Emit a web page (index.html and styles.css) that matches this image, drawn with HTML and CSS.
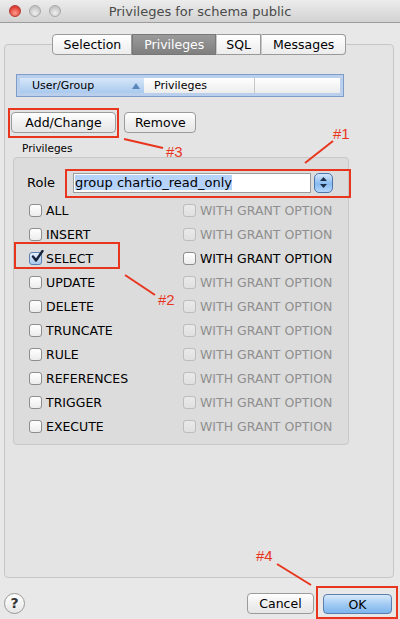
FILE: index.html
```html
<!DOCTYPE html>
<html lang="en">
<head>
  <meta charset="UTF-8">
  <title>Privileges for schema public</title>
  <link rel="stylesheet" href="styles.css">
</head>
<body>
  <div class="window">
    <div class="titlebar">
      <div class="lights">
        <span class="light red"></span>
        <span class="light"></span>
        <span class="light"></span>
      </div>
      <div class="title">Privileges for schema public</div>
      <div></div>
    </div>

    <div class="main">
      <div class="tabs">
        <span class="tab">Selection</span>
        <span class="tab active">Privileges</span>
        <span class="tab">SQL</span>
        <span class="tab">Messages</span>
      </div>

      <div class="panel">
        <div class="table-box">
          <div class="thead">
            <div class="th sorted">User/Group <span class="sort-arrow"></span></div>
            <div class="th">Privileges</div>
            <div class="th last"></div>
          </div>
        </div>

        <div class="btn-row">
          <button class="btn add">Add/Change</button>
          <button class="btn remove">Remove</button>
        </div>

        <div class="group-label">Privileges</div>
        <div class="group">
          <div class="role-row">
            <span class="role-label">Role</span>
            <div class="role-input"><span class="selected-text">group chartio_read_only</span></div>
            <span class="stepper">
              <svg width="9" height="13" viewBox="0 0 9 13"><path d="M4.5 1 L8 5 H1 Z M4.5 12 L8 8 H1 Z" fill="#1d2f4a"/></svg>
            </span>
          </div>

          <div class="priv-list">
            <div class="priv"><span class="col"><span class="cb"></span>ALL</span><span class="col grant off"><span class="cb"></span>WITH GRANT OPTION</span></div>
            <div class="priv"><span class="col"><span class="cb"></span>INSERT</span><span class="col grant off"><span class="cb"></span>WITH GRANT OPTION</span></div>
            <div class="priv"><span class="col"><span class="cb checked"><svg width="14" height="14" viewBox="0 0 14 14"><path d="M3 6.5 L6 10.5 L12.5 1" fill="none" stroke="#16233a" stroke-width="2.4" stroke-linecap="round" stroke-linejoin="round"/></svg></span>SELECT</span><span class="col grant"><span class="cb"></span>WITH GRANT OPTION</span></div>
            <div class="priv"><span class="col"><span class="cb"></span>UPDATE</span><span class="col grant off"><span class="cb"></span>WITH GRANT OPTION</span></div>
            <div class="priv"><span class="col"><span class="cb"></span>DELETE</span><span class="col grant off"><span class="cb"></span>WITH GRANT OPTION</span></div>
            <div class="priv"><span class="col"><span class="cb"></span>TRUNCATE</span><span class="col grant off"><span class="cb"></span>WITH GRANT OPTION</span></div>
            <div class="priv"><span class="col"><span class="cb"></span>RULE</span><span class="col grant off"><span class="cb"></span>WITH GRANT OPTION</span></div>
            <div class="priv"><span class="col"><span class="cb"></span>REFERENCES</span><span class="col grant off"><span class="cb"></span>WITH GRANT OPTION</span></div>
            <div class="priv"><span class="col"><span class="cb"></span>TRIGGER</span><span class="col grant off"><span class="cb"></span>WITH GRANT OPTION</span></div>
            <div class="priv"><span class="col"><span class="cb"></span>EXECUTE</span><span class="col grant off"><span class="cb"></span>WITH GRANT OPTION</span></div>
          </div>
        </div>
      </div>

      <div class="footer">
        <span class="help">?</span>
        <div class="footer-btns">
          <button class="btn cancel">Cancel</button>
          <button class="btn ok">OK</button>
        </div>
      </div>
    </div>

    <!-- red annotations drawn over the dialog -->
    <svg class="notes" width="400" height="619" viewBox="0 0 400 619">
      <g fill="none" stroke="#e8361e" stroke-width="2">
        <rect x="9" y="109" width="109" height="28"/>
        <rect x="66" y="170" width="284" height="27"/>
        <rect x="15" y="243" width="104" height="25"/>
        <rect x="317" y="587" width="80" height="31"/>
        <line x1="305" y1="163" x2="333" y2="141"/>
        <line x1="124" y1="139" x2="163" y2="148"/>
        <line x1="125" y1="275" x2="155" y2="295"/>
        <line x1="277" y1="564" x2="311" y2="585"/>
      </g>
      <g class="note-text">
        <text x="333" y="139">#1</text>
        <text x="166" y="157">#3</text>
        <text x="158" y="305">#2</text>
        <text x="256" y="561">#4</text>
      </g>
    </svg>
  </div>
</body>
</html>
```

FILE: styles.css
```css
body {
  margin: 0;
  font-family: 'DejaVu Sans', Verdana, sans-serif;
  color: #000;
}

.window {
  position: relative;
  width: 400px;
  height: 619px;
  background-color: #e8e8e8;
  display: flex;
  flex-direction: column;
  overflow: hidden;
}

/* title bar */
.titlebar {
  height: 22px;
  flex: none;
  display: grid;
  grid-template-columns: 80px 1fr 80px;
  align-items: center;
  background: linear-gradient(#ececec, #d2d2d2);
  border-bottom: 1px solid #9c9c9c;
}

.lights {
  display: flex;
  gap: 8px;
  padding-left: 9px;
}

.light {
  width: 12px;
  height: 12px;
  border-radius: 50%;
  box-sizing: border-box;
  border: 1px solid #a9a9a9;
  background: radial-gradient(circle at 50% 70%, #f0f0f0, #c4c4c4 70%);
}

.light.red {
  border-color: #b53a33;
  background: radial-gradient(circle at 50% 70%, #ff9a8a, #dc3d32 70%);
}

.title {
  font-size: 13px;
  color: #4a4a4a;
  text-align: center;
  white-space: nowrap;
}

/* main area */
.main {
  flex: 1;
  display: flex;
  flex-direction: column;
  padding: 11px 6px 0 4px;
}

.tabs {
  display: flex;
  justify-content: center;
  position: relative;
  z-index: 1;
  margin-bottom: -11px;
}

.tab {
  height: 19px;
  line-height: 19px;
  font-size: 12.5px;
  padding: 0 9px;
  background: linear-gradient(#ffffff, #ececec);
  border: 1px solid #9a9a9a;
  border-left: 1px solid #c8c8c8;
}

.tab:first-child {
  border-left: 1px solid #9a9a9a;
  border-radius: 4px 0 0 4px;
  padding: 0 10px 0 11px;
}

.tab:last-child {
  border-radius: 0 4px 4px 0;
  padding: 0 11px;
}

.tab.active {
  background: linear-gradient(#9a9a9a, #7f7f7f);
  border-color: #777;
  color: #fff;
  padding: 0 11px;
}

.panel {
  flex: 1;
  border: 1px solid #c6c6c6;
  border-radius: 4px;
  background-color: #e4e4e4;
  padding: 29px 0 0 6px;
}

/* table header box */
.table-box {
  margin-left: 5px;
  width: 328px;
  height: 23px;
  box-sizing: border-box;
  border: 1px solid #7e9cc8;
  background-color: #b9cfec;
  padding: 3px 3px;
}

.thead {
  display: flex;
  height: 15px;
  background: linear-gradient(#ffffff, #ececec);
  font-size: 11px;
}

.th {
  line-height: 15px;
  padding-left: 10px;
  width: 100px;
  border-right: 1px solid #c6c6c6;
}

.th.sorted {
  position: relative;
  width: 112px;
  padding-left: 12px;
  background: linear-gradient(#d6e6f8, #a9c9ee);
  border-right: none;
}

.th.last {
  flex: 1;
  border-right: none;
}

.sort-arrow {
  position: absolute;
  right: 4px;
  top: 5px;
  border-left: 4px solid transparent;
  border-right: 4px solid transparent;
  border-bottom: 6px solid #5a86bd;
}

/* buttons */
.btn-row {
  display: flex;
  gap: 8px;
  margin-top: 15px;
}

.btn {
  height: 21px;
  padding: 0 10px;
  font-family: 'DejaVu Sans', Verdana, sans-serif;
  font-size: 12.5px;
  color: #000;
  background: linear-gradient(#ffffff, #f0f0f0 50%, #e6e6e6);
  border: 1px solid #9b9b9b;
  border-radius: 4px;
}

.btn.add {
  width: 105px;
}

.btn.remove {
  width: 72px;
}

.group-label {
  font-size: 10.5px;
  margin: 9px 0 0 11px;
  height: 13px;
}

.group {
  margin: 2px 0 0 2px;
  width: 336px;
  height: 288px;
  box-sizing: border-box;
  border: 1px solid #c8c8c8;
  border-radius: 4px;
  background-color: #dcdcdc;
  padding: 14px 0 0 13px;
}

.role-row {
  display: flex;
  align-items: center;
  height: 21px;
  font-size: 13px;
}

.role-label {
  width: 46px;
}

.role-input {
  width: 238px;
  height: 20px;
  box-sizing: border-box;
  border: 1px solid #9c9c9c;
  background-color: #fff;
  padding-left: 1px;
  line-height: 18px;
}

.selected-text {
  background-color: #b5d3fb;
}

.stepper {
  margin-left: 3px;
  width: 19px;
  height: 20px;
  box-sizing: border-box;
  border: 1px solid #4d76ad;
  border-radius: 5px;
  background: linear-gradient(#d3e6fb, #88baf0 55%, #b3d6fb);
  display: flex;
  align-items: center;
  justify-content: center;
}

.priv-list {
  margin-top: 5px;
}

.priv {
  display: flex;
  height: 24px;
  align-items: center;
  font-size: 12.5px;
}

.col {
  display: flex;
  align-items: center;
  gap: 4px;
  width: 154px;
  padding-left: 2px;
}

.col.grant {
  width: auto;
  padding-left: 0;
}

.col.off {
  color: #8f8f8f;
}

.cb {
  width: 13px;
  height: 13px;
  box-sizing: border-box;
  border: 1px solid #8d8d8d;
  border-radius: 3px;
  background: linear-gradient(#ffffff, #ececec);
  position: relative;
}

.off .cb {
  border-color: #bdbdbd;
  background: linear-gradient(#eaeaea, #e0e0e0);
}

.cb.checked {
  border-color: #5a7fb0;
  background: linear-gradient(#e4effc, #a9c9ee);
}

.cb.checked svg {
  position: absolute;
  left: 0;
  top: -3px;
}

/* footer */
.footer {
  height: 41px;
  flex: none;
  display: flex;
  align-items: flex-start;
  justify-content: space-between;
  padding-top: 15px;
  box-sizing: border-box;
}

.help {
  width: 21px;
  height: 21px;
  box-sizing: border-box;
  border: 1px solid #9a9a9a;
  border-radius: 50%;
  background: linear-gradient(#ffffff, #e6e6e6);
  font-size: 14px;
  font-weight: bold;
  color: #333;
  text-align: center;
  line-height: 19px;
}

.footer-btns {
  display: flex;
  gap: 9px;
  padding-right: 2px;
}

.btn.cancel {
  width: 67px;
}

.btn.ok {
  width: 69px;
  height: 20px;
  margin-top: 1px;
  border-color: #5a7eae;
  background: linear-gradient(#d7e9fb, #a3cbf3 50%, #7db6ee);
}

/* annotations */
.notes {
  position: absolute;
  left: 0;
  top: 0;
  pointer-events: none;
}

.note-text {
  font-family: 'Liberation Sans', Arial, sans-serif;
  font-size: 15px;
  fill: #e8361e;
}
```
